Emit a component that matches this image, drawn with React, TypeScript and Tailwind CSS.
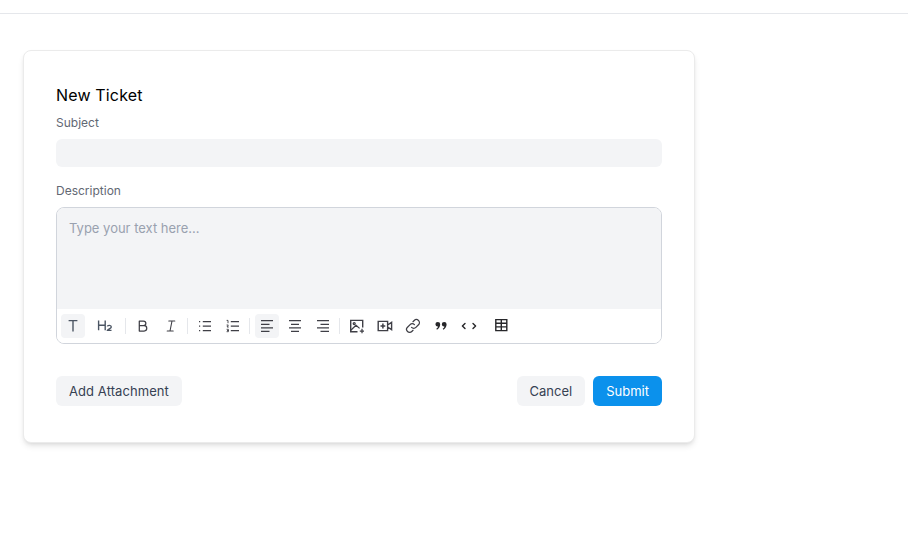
import { ReactNode } from 'react';

const font = { fontFamily: 'Inter, "Liberation Sans", sans-serif' };

// 工具栏图标的公共外壳
function Icon({ children }: { children: ReactNode }) {
  return (
    <svg width={16} height={16} viewBox="0 0 16 16" fill="none" stroke="#3f3f46" strokeWidth="1.25" strokeLinecap="round" strokeLinejoin="round">
      {children}
    </svg>
  );
}

function ToolButton({ active, className = '', children }: { active?: boolean; className?: string; children: ReactNode }) {
  return (
    <button className={`flex h-6 w-6 shrink-0 items-center justify-center rounded ${active ? 'bg-[#f3f4f6]' : ''} ${className}`}>
      {children}
    </button>
  );
}

function Divider() {
  return <div className="ml-1 mr-[5px] h-4 w-px shrink-0 bg-gray-200" />;
}

export default function App() {
  return (
    <div className="min-h-[547px] bg-white" style={font}>
      {/* 顶部栏 */}
      <div className="h-[14px] border-b border-gray-200" />

      <div className="pl-[23px] pt-9">
        <div className="w-[672px] rounded-lg border border-[#ebebeb] bg-white px-8 pb-[36px] pt-8 shadow-md">
          <h1 className="text-base leading-6 tracking-[0.01em] text-black">New Ticket</h1>

          <label className="mt-2 block text-xs leading-4 text-[#626873]">Subject</label>
          <input className="mt-2 block h-7 w-full rounded-md bg-[#f3f4f6]" />

          <label className="mt-4 block text-xs leading-4 text-[#626873]">Description</label>
          <div className="mt-2 overflow-hidden rounded-lg border border-gray-300">
            <div className="h-[101px] bg-[#f3f4f6] px-3 py-3 text-[13px] leading-[17px] text-gray-400">Type your text here...</div>

            {/* 编辑器工具栏 */}
            <div className="flex h-[34px] items-center bg-white pl-1">
              <ToolButton active>
                <Icon>
                  <path d="M3.6 2.6h8.8M8 2.6v11" strokeWidth="1.4" stroke="#4b5563" strokeLinecap="butt" />
                </Icon>
              </ToolButton>
              <ToolButton className="ml-2">
                <Icon>
                  <path d="M1.6 2.6v9.6M8.2 2.6v9.6M1.6 7.2h6.6" strokeWidth="1.4" stroke="#4b5563" strokeLinecap="butt" />
                  <path d="M10.3 8.4c.3-1.4 4-1.4 4 .5 0 1.5-2.9 2-4 3.5h4.2" strokeWidth="1.4" stroke="#4b5563" strokeLinecap="butt" />
                </Icon>
              </ToolButton>
              <div className="mx-[2px]" />
              <Divider />
              <ToolButton>
                <Icon>
                  <path d="M4.3 3h4.2a2.3 2.3 0 0 1 0 4.7H4.3zM4.3 7.7h4.8a2.6 2.6 0 0 1 0 5.3H4.3z" />
                </Icon>
              </ToolButton>
              <ToolButton className="ml-1">
                <Icon>
                  <path d="M5.8 3h6M4.2 13h6M9 3L7 13" strokeWidth="1.1" />
                </Icon>
              </ToolButton>
              <Divider />
              <ToolButton>
                <Icon>
                  <path d="M5.8 3.5H14M5.8 8H14M5.8 12.5H14M2 3.5h1.2M2 8h1.2M2 12.5h1.2" strokeLinecap="butt" />
                </Icon>
              </ToolButton>
              <ToolButton className="ml-1">
                <Icon>
                  <path d="M5.8 3.5H14M5.8 8H14M5.8 12.5H14" strokeLinecap="butt" />
                  <path d="M2 2.4h1v2.4M2 7h1.3L2 9h1.4M2 11.3h1.4v2.4H2M2.4 12.5h1" strokeWidth="0.9" />
                </Icon>
              </ToolButton>
              <Divider />
              <ToolButton active>
                <Icon>
                  <path d="M2 2.7h12M2 6.3h8.5M2 9.8h12M2 13.3h8.5" strokeLinecap="butt" />
                </Icon>
              </ToolButton>
              <ToolButton className="ml-1">
                <Icon>
                  <path d="M2 2.7h12M4 6.3h8M2 9.8h12M4 13.3h8" strokeLinecap="butt" />
                </Icon>
              </ToolButton>
              <ToolButton className="ml-1">
                <Icon>
                  <path d="M2 2.7h12M5.5 6.3H14M2 9.8h12M5.5 13.3H14" strokeLinecap="butt" />
                </Icon>
              </ToolButton>
              <Divider />
              <ToolButton>
                <Icon>
                  <path d="M8.5 13.8H1.7V2.4h12v7" strokeWidth="1.4" strokeLinecap="butt" strokeLinejoin="miter" />
                  <circle cx="5.2" cy="5.6" r="1" />
                  <path d="M1.8 12.2l5.2-5 3.6 3.2M13 10.8v4.4M10.8 13H15" strokeLinecap="butt" />
                </Icon>
              </ToolButton>
              <ToolButton className="ml-1">
                <Icon>
                  <path d="M1.2 3.4h9.4v9.2H1.2zM10.6 7l4-2.6v7.2l-4-2.6" strokeWidth="1.4" strokeLinejoin="miter" />
                  <path d="M5.9 5.6v4.8M3.5 8h4.8" strokeWidth="1.5" strokeLinecap="butt" />
                </Icon>
              </ToolButton>
              <ToolButton className="ml-1">
                <Icon>
                  <path d="M6.6 9.4a3 3 0 0 0 4.3 0l2.6-2.6a3 3 0 0 0-4.3-4.3L8 3.7" />
                  <path d="M9.4 6.6a3 3 0 0 0-4.3 0L2.5 9.2a3 3 0 0 0 4.3 4.3L8 12.3" />
                </Icon>
              </ToolButton>
              <ToolButton className="ml-1">
                <Icon>
                  <path d="M2.4 6.3a2.4 2.4 0 1 1 4.8 0c0 2.6-1.4 4.5-3.2 5.4l-.7-1c1-.6 1.5-1.3 1.7-2.2a2.4 2.4 0 0 1-2.6-2.2zM8.8 6.3a2.4 2.4 0 1 1 4.8 0c0 2.6-1.4 4.5-3.2 5.4l-.7-1c1-.6 1.5-1.3 1.7-2.2a2.4 2.4 0 0 1-2.6-2.2z" fill="#27272a" stroke="none" />
                </Icon>
              </ToolButton>
              <ToolButton className="ml-1">
                <Icon>
                  <path d="M4 5.4L1.4 8 4 10.6M12 5.4L14.6 8 12 10.6" strokeWidth="1.4" stroke="#27272a" />
                </Icon>
              </ToolButton>
              <ToolButton className="ml-2">
                <Icon>
                  <path d="M2.8 1.6h11v11h-11zM2.8 5.2h11M2.8 8.9h11M8.3 1.6v11" strokeWidth="1.4" stroke="#27272a" strokeLinecap="butt" strokeLinejoin="miter" />
                </Icon>
              </ToolButton>
            </div>
          </div>

          {/* 底部操作 */}
          <div className="mt-8 flex items-center justify-between">
            <button className="h-[30px] rounded-md bg-[#f3f4f6] px-[13px] pt-px text-[13px] tracking-[0.006em] text-gray-700">Add Attachment</button>
            <div className="flex items-center gap-2">
              <button className="h-[30px] rounded-md bg-[#f3f4f6] px-[13px] pt-px text-[13px] text-gray-700">Cancel</button>
              <button className="h-[30px] rounded-md bg-[#0b91ec] px-[13px] pt-px text-[13px] text-white">Submit</button>
            </div>
          </div>
        </div>
      </div>
    </div>
  );
}
